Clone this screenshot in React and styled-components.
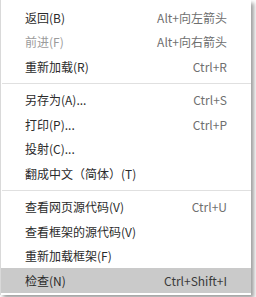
import styled, { createGlobalStyle } from "styled-components";

const GlobalStyle = createGlobalStyle`
  html, body {
    margin: 0;
    padding: 0;
    background: #ffffff;
  }
  body {
    width: 256px;
    height: 297px;
    overflow: hidden;
  }
`;

const Menu = styled.div`
  width: 251px;
  box-sizing: border-box;
  padding: 5px 0 2px;
  background: #ffffff;
  border-left: 1px solid #d9d9d9;
  box-shadow: 3px 3px 4px rgba(0, 0, 0, 0.38);
  font-family: "Noto Sans CJK SC", "Open Sans", sans-serif;
  font-size: 12px;
`;

const Item = styled.div`
  height: 24.5px;
  display: flex;
  align-items: center;
  justify-content: space-between;
  padding: 0 24px 0 24px;
  color: ${(p) => (p.$disabled ? "#9b9b9b" : "#2b2b2b")};
  background: ${(p) => (p.$active ? "#cacaca" : "transparent")};
`;

const Shortcut = styled.span`
  color: ${(p) => (p.$active ? "#3a3a3a" : "#6f6f6f")};
`;

const Separator = styled.div`
  height: 1px;
  margin: 4px 0 4px 1px;
  background: #e0e0e0;
`;

const groups = [
  [
    { label: "返回(B)", key: "Alt+向左箭头" },
    { label: "前进(F)", key: "Alt+向右箭头", disabled: true },
    { label: "重新加载(R)", key: "Ctrl+R" },
  ],
  [
    { label: "另存为(A)...", key: "Ctrl+S" },
    { label: "打印(P)...", key: "Ctrl+P" },
    { label: "投射(C)..." },
    { label: "翻成中文（简体）(T)" },
  ],
  [
    { label: "查看网页源代码(V)", key: "Ctrl+U" },
    { label: "查看框架的源代码(V)" },
    { label: "重新加载框架(F)" },
    { label: "检查(N)", key: "Ctrl+Shift+I", active: true },
  ],
];

export default function App() {
  return (
    <>
      <GlobalStyle />
      <Menu>
        {groups.map((group, gi) => (
          <div key={gi}>
            {gi > 0 && <Separator />}
            {group.map((item) => (
              <Item key={item.label} $disabled={item.disabled} $active={item.active}>
                <span>{item.label}</span>
                {item.key && <Shortcut $active={item.active}>{item.key}</Shortcut>}
              </Item>
            ))}
          </div>
        ))}
      </Menu>
    </>
  );
}
